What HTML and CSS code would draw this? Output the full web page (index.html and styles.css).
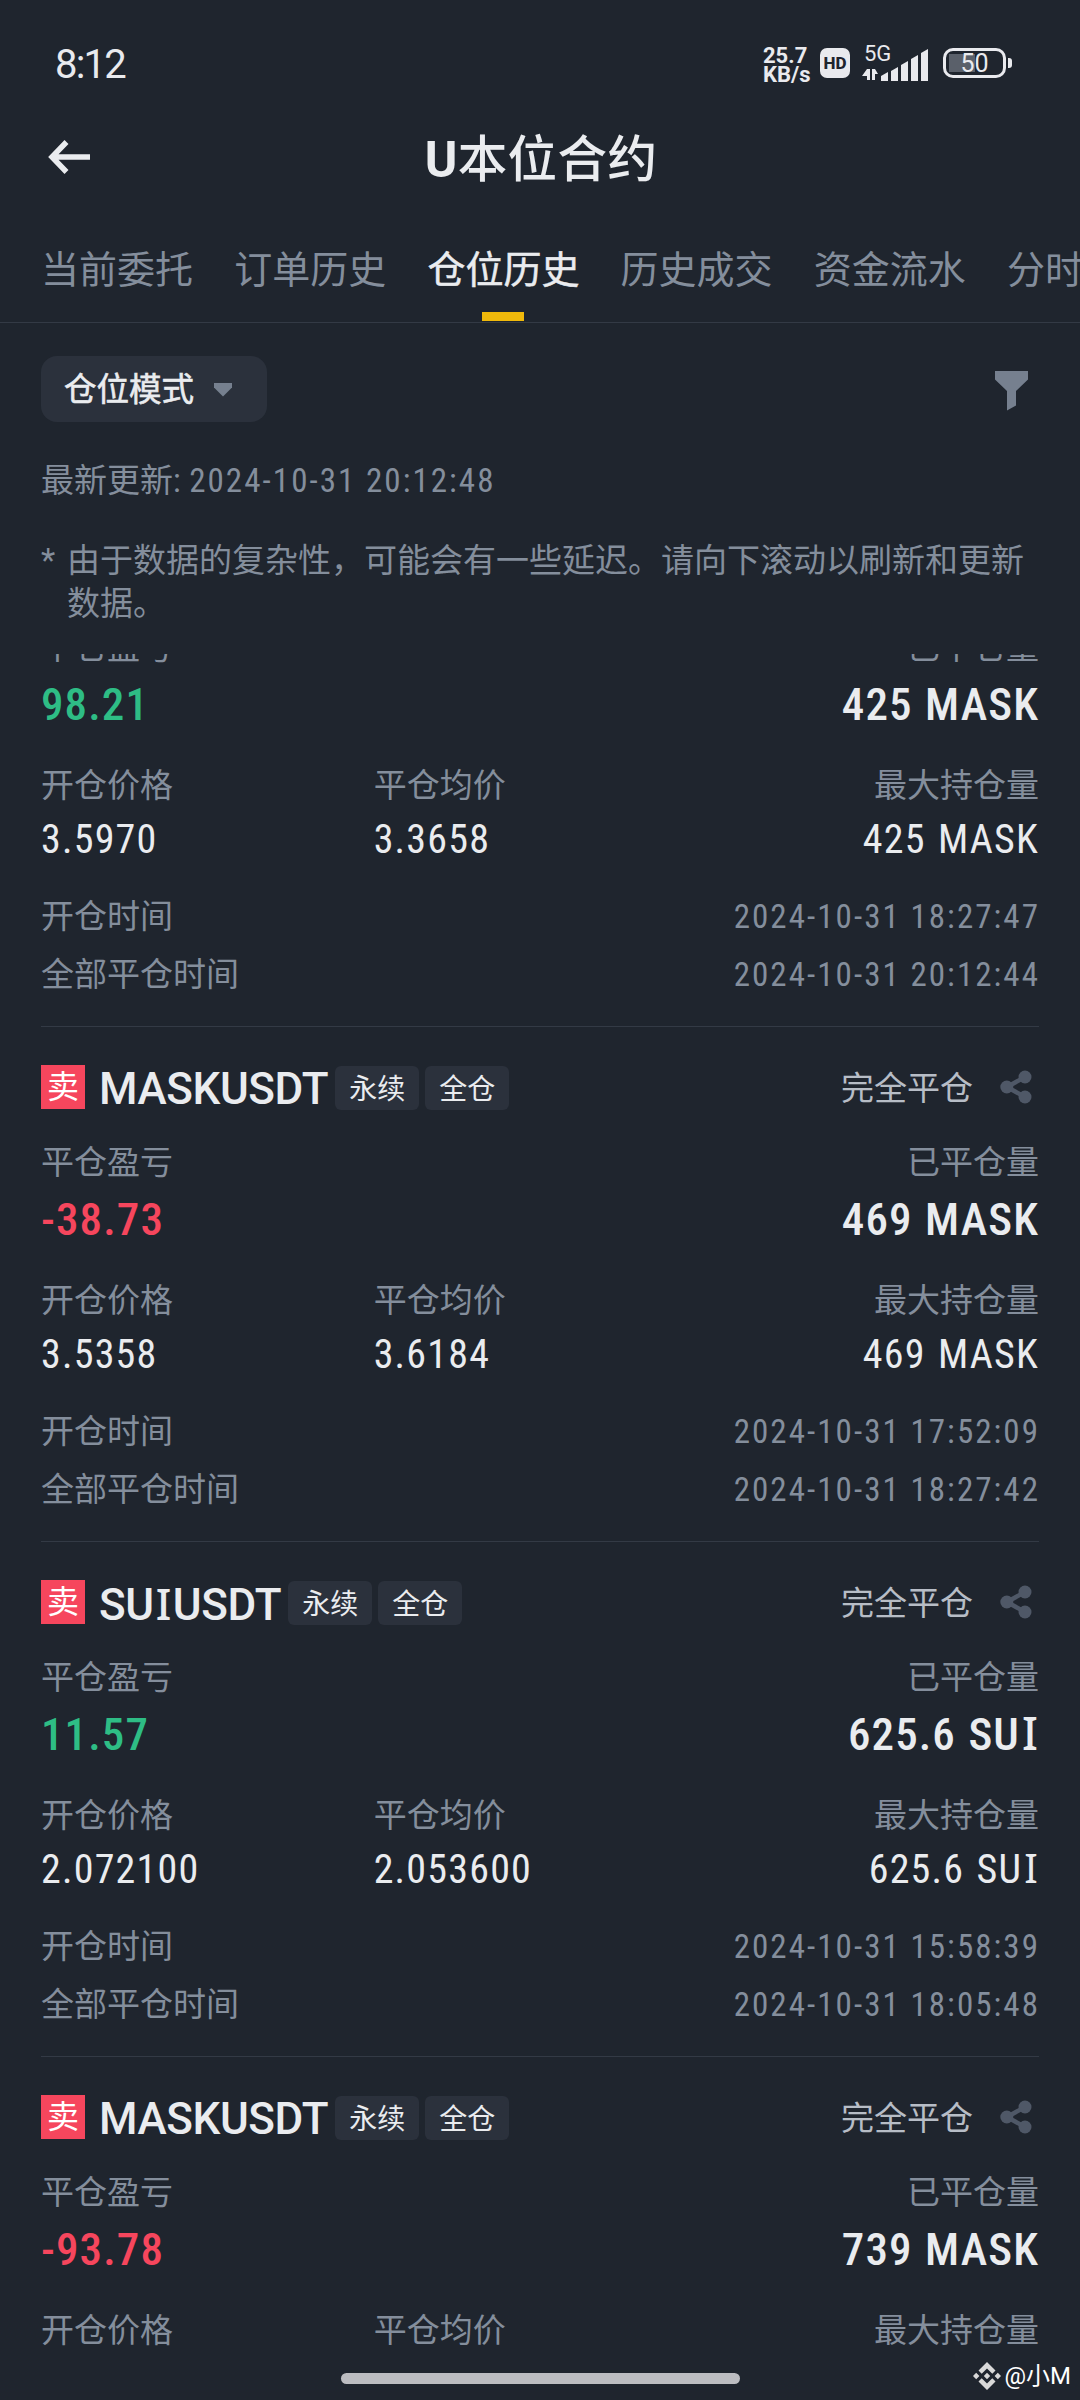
FILE: index.html
```
<!DOCTYPE html>
<html lang="zh-CN">

<head>
  <meta charset="UTF-8" />
  <meta name="viewport" content="width=device-width, initial-scale=1.0" />
  <title>U本位合约</title>
  <link rel="stylesheet" href="styles.css">
</head>

<body>
  <svg class="sprite" width="0" height="0">
    <symbol id="share" viewBox="0 0 32 34">
      <path d="M25 7L7 17L25 27" fill="none" stroke="currentColor" stroke-width="4.5" />
      <circle cx="25" cy="7" r="6.5" fill="currentColor" />
      <circle cx="6.8" cy="17" r="6.5" fill="currentColor" />
      <circle cx="25" cy="27" r="6.5" fill="currentColor" />
    </symbol>
  </svg>

  <div class="status-bar">
    <span class="clock">8:12</span>
    <div class="status-icons">
      <div class="net-speed"><span>25.7</span><span>KB/s</span></div>
      <span class="hd">HD</span>
      <div class="signal">
        <span class="signal-type">5G</span>
        <svg width="68" height="33" viewBox="0 0 68 33" fill="#e9eaee">
          <path d="M5 21h3v11h-3v-4h-5zM10 21h3l3 5h-3v6h-3z" />
          <path d="M19 33v-5l7-4v9zM29 33v-10l7-4v14zM39 33v-16l7-4v20zM49 33v-22l7-4v26zM59 33v-28l7-4v32z" />
        </svg>
      </div>
      <div class="battery"><span>50</span></div>
    </div>
  </div>

  <div class="title-bar">
    <svg class="back" width="43" height="34" viewBox="0 0 43 34" fill="none" stroke="#eaecef" stroke-width="5.5">
      <path d="M18.500 2L4 17L18.500 32M4 17H42" />
    </svg>
    <h1><b>U</b>本位合约</h1>
  </div>

  <div class="tabs">
    <span class="tab">当前委托</span>
    <span class="tab">订单历史</span>
    <span class="tab active">仓位历史</span>
    <span class="tab">历史成交</span>
    <span class="tab">资金流水</span>
    <span class="tab">分时</span>
  </div>

  <div class="filter-row">
    <div class="mode">
      仓位模式
      <svg width="18" height="14" viewBox="0 0 18 14" fill="#76808f"><path d="M0 0h18v4.500l-9 9l-9-9z" /></svg>
    </div>
    <svg class="funnel" width="34" height="40" viewBox="0 0 34 40" fill="#76808f">
      <path d="M0 0h33v8.500l-12 11.500v14.500l-9 5v-19.500l-12-11.500z" />
    </svg>
  </div>

  <p class="updated">最新更新: <span class="date">2024-10-31 20:12:48</span></p>
  <div class="note">
    <span class="star">*</span>
    <p>由于数据的复杂性，可能会有一些延迟。请向下滚动以刷新和更新数据。</p>
  </div>

  <div class="list">
    <div class="card card-first">
      <div class="row label"><span>平仓盈亏</span><span>已平仓量</span></div>
      <div class="row pnl"><span class="up">98.21</span><span>425 MASK</span></div>
      <div class="cols label"><span>开仓价格</span><span>平仓均价</span><span>最大持仓量</span></div>
      <div class="cols price"><span>3.5970</span><span>3.3658</span><span>425 MASK</span></div>
      <div class="row time"><span>开仓时间</span><span class="date">2024-10-31 18:27:47</span></div>
      <div class="row time"><span>全部平仓时间</span><span class="date">2024-10-31 20:12:44</span></div>
    </div>

    <div class="card">
      <div class="card-head">
        <span class="side">卖</span>
        <span class="symbol">MASKUSDT</span>
        <span class="tag">永续</span>
        <span class="tag">全仓</span>
        <span class="state">完全平仓</span>
        <svg class="share" width="32" height="34"><use href="#share" /></svg>
      </div>
      <div class="row label"><span>平仓盈亏</span><span>已平仓量</span></div>
      <div class="row pnl"><span class="down">-38.73</span><span>469 MASK</span></div>
      <div class="cols label"><span>开仓价格</span><span>平仓均价</span><span>最大持仓量</span></div>
      <div class="cols price"><span>3.5358</span><span>3.6184</span><span>469 MASK</span></div>
      <div class="row time"><span>开仓时间</span><span class="date">2024-10-31 17:52:09</span></div>
      <div class="row time"><span>全部平仓时间</span><span class="date">2024-10-31 18:27:42</span></div>
    </div>

    <div class="card">
      <div class="card-head">
        <span class="side">卖</span>
        <span class="symbol">SU<i>I</i>USDT</span>
        <span class="tag">永续</span>
        <span class="tag">全仓</span>
        <span class="state">完全平仓</span>
        <svg class="share" width="32" height="34"><use href="#share" /></svg>
      </div>
      <div class="row label"><span>平仓盈亏</span><span>已平仓量</span></div>
      <div class="row pnl"><span class="up">11.57</span><span>625.6 SU<i>I</i></span></div>
      <div class="cols label"><span>开仓价格</span><span>平仓均价</span><span>最大持仓量</span></div>
      <div class="cols price"><span>2.072100</span><span>2.053600</span><span>625.6 SU<i>I</i></span></div>
      <div class="row time"><span>开仓时间</span><span class="date">2024-10-31 15:58:39</span></div>
      <div class="row time"><span>全部平仓时间</span><span class="date">2024-10-31 18:05:48</span></div>
    </div>

    <div class="card">
      <div class="card-head">
        <span class="side">卖</span>
        <span class="symbol">MASKUSDT</span>
        <span class="tag">永续</span>
        <span class="tag">全仓</span>
        <span class="state">完全平仓</span>
        <svg class="share" width="32" height="34"><use href="#share" /></svg>
      </div>
      <div class="row label"><span>平仓盈亏</span><span>已平仓量</span></div>
      <div class="row pnl"><span class="down">-93.78</span><span>739 MASK</span></div>
      <div class="cols label"><span>开仓价格</span><span>平仓均价</span><span>最大持仓量</span></div>
    </div>
  </div>

  <div class="home-bar"></div>
  <div class="watermark">
    <svg width="28" height="28" viewBox="0 0 28 28" fill="#d9d9d9">
      <path d="M14 0l8.500 8.500l-3.200 3.200l-5.300-5.300l-5.300 5.300l-3.200-3.200z" />
      <path d="M14 28l8.500-8.500l-3.200-3.200l-5.300 5.300l-5.300-5.300l-3.200 3.200z" />
      <path d="M14 10.800l3.200 3.200l-3.200 3.200l-3.200-3.200zM3.200 10.800l3.200 3.200l-3.200 3.200l-3.200-3.200zM24.800 10.800l3.200 3.200l-3.200 3.200l-3.200-3.200z" />
    </svg>
    <span>@小M</span>
  </div>
</body>

</html>
```
FILE: styles.css
```
* {
  box-sizing: border-box;
}

body {
  position: relative;
  margin: 0;
  width: 1080px;
  height: 2400px;
  overflow: hidden;
  background-color: #1f252e;
  color: #eaecef;
  font-family: Roboto, "Noto Sans CJK SC", sans-serif;
  font-size: 33px;
  line-height: 44px;
}

p,
h1 {
  margin: 0;
}

/* capital I with bars */
i {
  margin: 0 2px;
  font-family: "Noto Sans", sans-serif;
  font-style: normal;
  line-height: 1;
}

.row i,
.cols i {
  margin-right: 0;
}

.sprite {
  position: absolute;
}

/* Status bar */
.status-bar {
  display: flex;
  justify-content: space-between;
  align-items: center;
  height: 126px;
  padding: 0 69px 0 55px;
}

.clock {
  padding-top: 3px;
  font-size: 40px;
  letter-spacing: -1.8px;
  color: #e9eaee;
}

.status-icons {
  display: flex;
  align-items: center;
  color: #e9eaee;
}

.net-speed {
  display: flex;
  flex-direction: column;
  width: 57px;
  font-size: 22px;
  font-weight: 700;
  line-height: 19px;
  padding-top: 3px;
}

.hd {
  width: 30px;
  height: 30px;
  margin-right: 12px;
  border-radius: 7px;
  background-color: #e9eaee;
  color: #1f252e;
  font-size: 17px;
  font-weight: 800;
  line-height: 30px;
  text-align: center;
}

.signal {
  width: 68px;
  height: 38px;
  margin: 0 13px 3px 0;
}

.signal svg {
  display: block;
  margin-top: -17px;
}

.signal-type {
  display: block;
  padding-left: 2px;
  font-size: 22px;
  line-height: 22px;
}

.battery {
  position: relative;
  width: 63px;
  height: 30px;
  margin-right: 5px;
  border: 3px solid #e9eaee;
  border-radius: 10px;
  background: linear-gradient(#5a606a, #5a606a) 3px 3px / 26px 18px no-repeat;
  font-size: 25px;
  line-height: 25px;
  text-align: center;
}

.battery::after {
  content: "";
  position: absolute;
  right: -9px;
  top: 7px;
  width: 4px;
  height: 10px;
  border-radius: 0 3px 3px 0;
  background-color: #e9eaee;
}

/* Title */
.title-bar {
  display: flex;
  align-items: center;
  height: 68px;
  padding: 0 48px;
}

.back {
  margin-bottom: 6px;
}

.title-bar h1 {
  flex: 1;
  padding-right: 41px;
  font-size: 49.5px;
  font-weight: 500;
  letter-spacing: 0.4px;
  line-height: 68px;
  text-align: center;
}

.title-bar b {
  font-weight: 700;
}

/* Tabs */
.tabs {
  display: flex;
  gap: 41.2px;
  height: 129px;
  padding: 46px 0 0 41px;
  border-bottom: 1px solid #333a45;
  overflow: hidden;
}

.tab {
  flex-shrink: 0;
  font-size: 38px;
  line-height: 60px;
  color: #848e9c;
}

.tab.active {
  display: flex;
  flex-direction: column;
  align-items: center;
  gap: 12px;
  color: #eaecef;
  -webkit-text-stroke: 0.5px #eaecef;
}

.tab.active::after {
  content: "";
  width: 42px;
  height: 9px;
  background-color: #f0b90b;
}

/* Filter */
.filter-row {
  display: flex;
  justify-content: space-between;
  align-items: center;
  margin: 33px 51px 0 41px;
}

.mode {
  display: flex;
  align-items: center;
  gap: 20px;
  width: 226px;
  height: 66px;
  padding: 1px 0 0 23px;
  border-radius: 16px;
  background-color: #2b313c;
  font-size: 32.5px;
  -webkit-text-stroke: 0.6px #eaecef;
}

.funnel {
  margin-top: 3px;
}

.updated {
  margin: 37px 41px 0;
  color: #848e9c;
}

.date {
  font-stretch: 75%;
  letter-spacing: 2.05px;
}

.row .date {
  margin-right: -1px;
}

.note {
  display: flex;
  margin: 36px 41px 29px;
  color: #848e9c;
  line-height: 43px;
}

.star {
  width: 26px;
  flex-shrink: 0;
}

/* Positions */
.list {
  height: 1706px;
  overflow: hidden;
}

.card {
  margin: 0 41px;
  padding: 38px 0 29px;
  border-bottom: 1px solid #333a45;
}

.card-first {
  margin-top: -28px;
  padding-top: 0;
}

.card-head {
  display: flex;
  align-items: center;
  height: 44px;
  margin-bottom: 32px;
}

.side {
  width: 44px;
  height: 44px;
  margin-right: 14px;
  background-color: #f6465d;
  color: #fff;
  font-size: 32px;
  line-height: 45px;
  text-align: center;
}

.symbol {
  padding-top: 3px;
  margin-right: 7px;
  font-size: 44px;
  font-weight: 500;
  letter-spacing: -0.4px;
}

.tag {
  width: 84px;
  height: 44px;
  margin: 2px 6px 0 0;
  border-radius: 6px;
  background-color: #2b313c;
  font-size: 28px;
  line-height: 47px;
  text-align: center;
}

.state {
  padding-top: 4px;
  margin-left: auto;
  color: #b7bdc6;
}

.share {
  margin: 0 7px 0 27px;
  color: #4f5867;
}

.row {
  display: flex;
  justify-content: space-between;
}

.cols {
  display: grid;
  grid-template-columns: repeat(3, 1fr);
}

.cols span:last-child {
  text-align: right;
}

.label,
.time {
  color: #848e9c;
}

.pnl {
  margin: 7px 0 31px;
  font-size: 45px;
  font-weight: 500;
  font-stretch: 75%;
  line-height: 56px;
  letter-spacing: 1.1px;
  word-spacing: 1px;
}

.price {
  margin: 8px 0 31px;
  font-size: 40px;
  font-stretch: 75%;
  line-height: 48px;
  letter-spacing: 1.2px;
  word-spacing: 2px;
}

.time + .time {
  margin-top: 14px;
}

.up {
  color: #2ebd85;
}

.down {
  color: #f6465d;
}

.home-bar {
  width: 399px;
  height: 11px;
  margin: 13px auto 0;
  border-radius: 6px;
  background-color: #bcbdc1;
}

.watermark {
  position: absolute;
  right: 9px;
  bottom: 2px;
  display: flex;
  align-items: center;
  gap: 3px;
  color: #fff;
  font-size: 24px;
}
```
